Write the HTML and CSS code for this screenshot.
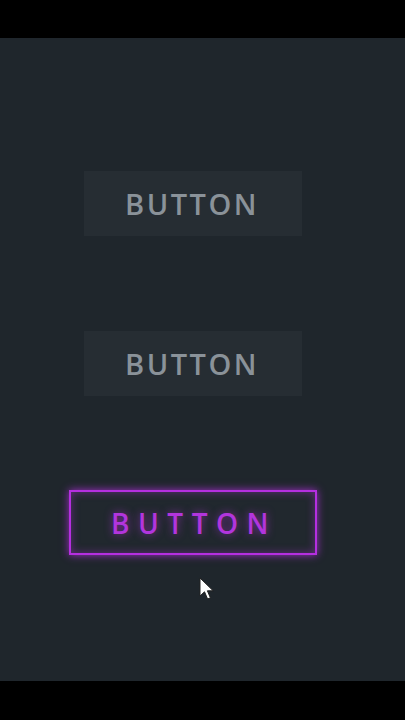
FILE: index.html
```html
<!DOCTYPE html>
<html lang="en">

<head>
    <meta charset="UTF-8">
    <meta name="viewport" content="width=device-width, initial-scale=1.0">
    <title>Buttons</title>
    <link rel="stylesheet" href="styles.css">
</head>

<body>
    <div class="bar"></div>

    <main class="stage">
        <a class="btn">BUTTON</a>
        <a class="btn">BUTTON</a>
        <div class="hover-wrap">
            <a class="btn btn-neon">BUTTON</a>
            <svg class="cursor" width="16" height="24" viewBox="0 0 16 24">
                <path d="M1 1 L1 19 L5.5 14.8 L8.6 22 L11.4 20.8 L8.4 13.8 L14.2 13.8 Z" fill="#fff" stroke="#222" stroke-width="1"/>
            </svg>
        </div>
    </main>

    <div class="bar"></div>
</body>

</html>
```
FILE: styles.css
```css
body {
    margin: 0;
    padding: 0;
    background-color: #000;
    font-family: "Open Sans", Arial, sans-serif;
}

.bar {
    height: 38px;
    background-color: #000;
}

.bar:last-child {
    height: 39px;
}

.stage {
    height: 643px;
    background-color: #1f262c;
    display: flex;
    flex-direction: column;
    align-items: center;
    padding-top: 133px;
    padding-right: 19px;
    box-sizing: border-box;
}

.btn {
    display: flex;
    align-items: center;
    justify-content: center;
    width: 218px;
    height: 65px;
    background-color: #262d33;
    color: #8a9299;
    font-size: 29px;
    font-weight: 600;
    letter-spacing: 2.5px;
    padding-right: 2px;
    margin-bottom: 95px;
    box-sizing: border-box;
}

.hover-wrap {
    position: relative;
    margin-top: -1px;
}

.btn-neon {
    width: 248px;
    height: 65px;
    background-color: #21282e;
    border: 2px solid #b52fe0;
    color: #b235dd;
    letter-spacing: 8.5px;
    padding-left: 2px;
    padding-right: 0;
    font-size: 28px;
    box-shadow: 0 0 8px rgba(181, 47, 224, 0.85), inset 0 0 8px rgba(181, 47, 224, 0.45);
    text-shadow: 0 0 8px rgba(181, 47, 224, 0.65);
    margin-bottom: 0;
}

.cursor {
    position: absolute;
    left: 130px;
    top: 87px;
}
```
